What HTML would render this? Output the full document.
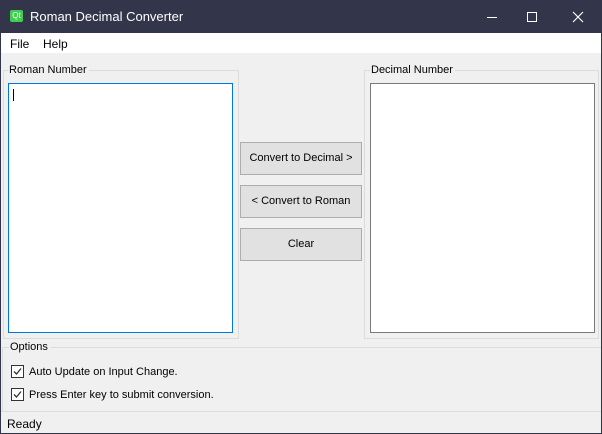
<html><head><style>
body{margin:0;width:602px;height:434px;background:#f0f0f0;font-family:"Liberation Sans",sans-serif;font-size:11px;color:#000;position:relative;overflow:hidden}
div{position:absolute;box-sizing:border-box}
.t{white-space:nowrap}
.btn{left:240px;width:122px;height:33px;background:#e1e1e1;border:1px solid #adadad;text-align:center;line-height:31px}
.cb{left:11px;width:13px;height:13px;border:1px solid #333;background:#fff}
</style></head><body>
<div style="left:0;top:0;width:602px;height:33px;background:#33354a"></div>
<div style="left:10px;top:10px;width:13px;height:12px;background:#41cd52;border-radius:2px;color:#fff;font-size:8px;line-height:12px;text-align:center">Qt</div>
<div class="t" style="left:30px;top:9px;color:#fff;font-size:13px">Roman Decimal Converter</div>
<div style="left:487px;top:17px;width:10px;height:1px;background:#fff"></div>
<div style="left:527px;top:12px;width:10px;height:10px;border:1px solid #fff"></div>
<svg style="position:absolute;left:572px;top:11px" width="12" height="12"><path d="M1 1L11 11M11 1L1 11" stroke="#fff" stroke-width="1.2"/></svg>
<div style="left:1px;top:33px;width:600px;height:20px;background:#fff"></div>
<div class="t" style="left:10px;top:37px;font-size:12px">File</div>
<div class="t" style="left:43px;top:37px;font-size:12px">Help</div>
<div style="left:3px;top:70px;width:236px;height:269px;border:1px solid #dcdcdc"></div>
<div class="t" style="left:8px;top:64px;background:#f0f0f0;padding:0 2px 0 1px;font-size:11px">Roman Number</div>
<div style="left:8px;top:83px;width:225px;height:250px;background:#fff;border:1px solid #0078d7"></div>
<div style="left:13px;top:89px;width:1px;height:12px;background:#000"></div>
<div style="left:364px;top:70px;width:235px;height:269px;border:1px solid #dcdcdc"></div>
<div class="t" style="left:370px;top:64px;background:#f0f0f0;padding:0 2px 0 1px;font-size:11px">Decimal Number</div>
<div style="left:370px;top:83px;width:225px;height:250px;background:#fff;border:1px solid #7a7a7a"></div>
<div class="btn" style="top:142px">Convert to Decimal &gt;</div>
<div class="btn" style="top:185px">&lt; Convert to Roman</div>
<div class="btn" style="top:228px">Clear</div>
<div style="left:2px;top:347px;width:600px;height:64px;border-top:1px solid #dcdcdc;border-left:1px solid #dcdcdc"></div>
<div class="t" style="left:9px;top:341px;background:#f0f0f0;padding:0 2px 0 1px;font-size:11px">Options</div>
<div class="cb" style="top:365px"></div>
<svg style="position:absolute;left:12px;top:366px" width="11" height="11"><path d="M2 5.5L4.5 8L9 2.5" stroke="#333" stroke-width="1.3" fill="none"/></svg>
<div class="t" style="left:29px;top:366px">Auto Update on Input Change.</div>
<div class="cb" style="top:388px"></div>
<svg style="position:absolute;left:12px;top:389px" width="11" height="11"><path d="M2 5.5L4.5 8L9 2.5" stroke="#333" stroke-width="1.3" fill="none"/></svg>
<div class="t" style="left:29px;top:389px">Press Enter key to submit conversion.</div>
<div style="left:1px;top:411px;width:600px;height:1px;background:#dcdcdc"></div>
<div class="t" style="left:7px;top:417px;font-size:12px">Ready</div>
<div style="left:0;top:0;width:602px;height:434px;border:1px solid #33354a;border-top:none"></div>
</body></html>
